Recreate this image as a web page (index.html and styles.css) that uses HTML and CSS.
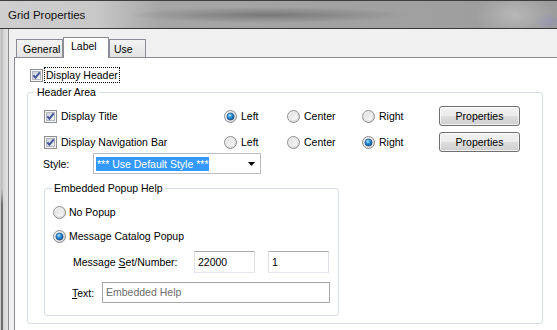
FILE: index.html
```html
<!DOCTYPE html>
<html>
<head>
<meta charset="utf-8">
<link rel="stylesheet" href="styles.css">
</head>
<body>
<svg class="sprite" width="0" height="0" aria-hidden="true">
  <defs>
    <linearGradient id="cbg" x1="0" y1="0" x2="1" y2="1">
      <stop offset="0" stop-color="#cbcfd6"/>
      <stop offset="1" stop-color="#f4f4f6"/>
    </linearGradient>
    <linearGradient id="rg" x1="0" y1="0" x2="1" y2="1">
      <stop offset="0" stop-color="#f6f6f6"/>
      <stop offset="1" stop-color="#d2d2d2"/>
    </linearGradient>
    <linearGradient id="rgi" x1="0" y1="0" x2="1" y2="1">
      <stop offset="0" stop-color="#e2e2e2"/>
      <stop offset="1" stop-color="#f7f7f7"/>
    </linearGradient>
    <radialGradient id="rdot" cx="0.4" cy="0.35" r="0.7">
      <stop offset="0" stop-color="#a6e3ff"/>
      <stop offset="0.45" stop-color="#2e8fd6"/>
      <stop offset="1" stop-color="#0a4c8c"/>
    </radialGradient>
    <symbol id="cb" viewBox="0 0 13 13">
      <rect x="0.5" y="0.5" width="12" height="12" fill="#f5f5f5" stroke="#8e8f8f"/>
      <rect x="2.5" y="2.5" width="8" height="8" fill="url(#cbg)" stroke="#b2b6bd"/>
      <path d="M3.3 6.3 L5.4 8.7 L9.8 3.3" fill="none" stroke="#43569a" stroke-width="1.9"/>
    </symbol>
    <symbol id="rd" viewBox="0 0 13 13">
      <circle cx="6.5" cy="6.5" r="6" fill="url(#rg)" stroke="#8e8f8f"/>
      <circle cx="6.5" cy="6.5" r="4" fill="url(#rgi)"/>
    </symbol>
    <symbol id="rdon" viewBox="0 0 13 13">
      <circle cx="6.5" cy="6.5" r="6" fill="url(#rg)" stroke="#8e8f8f"/>
      <circle cx="6.5" cy="6.5" r="3.6" fill="url(#rdot)" stroke="#1b4a7a" stroke-width="0.6"/>
    </symbol>
  </defs>
</svg>
<div class="window">
  <div class="titlebar"><span class="title">Grid Properties</span></div>
  <div class="body">
    <div class="frame"></div>
    <div class="client">
      <div class="tabs">
        <div class="tab tab-general">General</div>
        <div class="tab tab-label active">Label</div>
        <div class="tab tab-use">Use</div>
      </div>
      <div class="panel">
        <div class="hdr-row">
          <svg class="box" width="13" height="13"><use href="#cb"/></svg>
          <span class="focus">Display Header</span>
        </div>
        <fieldset class="group header-area">
          <legend>Header Area</legend>
          <div class="opts">
            <div class="opt"><svg class="box" width="13" height="13"><use href="#cb"/></svg><span>Display Title</span></div>
            <div class="opt radio"><svg class="box" width="13" height="13"><use href="#rdon"/></svg><span>Left</span></div>
            <div class="opt radio"><svg class="box" width="13" height="13"><use href="#rd"/></svg><span>Center</span></div>
            <div class="opt radio"><svg class="box" width="13" height="13"><use href="#rd"/></svg><span>Right</span></div>
            <div class="btn">Properties</div>

            <div class="opt"><svg class="box" width="13" height="13"><use href="#cb"/></svg><span>Display Navigation Bar</span></div>
            <div class="opt radio"><svg class="box" width="13" height="13"><use href="#rd"/></svg><span>Left</span></div>
            <div class="opt radio"><svg class="box" width="13" height="13"><use href="#rd"/></svg><span>Center</span></div>
            <div class="opt radio"><svg class="box" width="13" height="13"><use href="#rdon"/></svg><span>Right</span></div>
            <div class="btn">Properties</div>
          </div>
          <div class="style-row">
            <span class="style-label">Style:</span>
            <div class="combo">
              <span class="sel">*** Use Default Style ***</span>
              <svg class="arrow" width="7" height="4"><polygon points="0,0 7,0 3.5,4" fill="#000"/></svg>
            </div>
          </div>
          <fieldset class="group embedded">
            <legend>Embedded Popup Help</legend>
            <div class="radio-row first"><svg class="box" width="13" height="13"><use href="#rd"/></svg><span>No Popup</span></div>
            <div class="radio-row"><svg class="box" width="13" height="13"><use href="#rdon"/></svg><span>Message Catalog Popup</span></div>
            <div class="field-row">
              <span class="msg-label">Message <u>S</u>et/Number:</span>
              <div class="input">22000</div>
              <div class="input second">1</div>
            </div>
            <div class="text-row">
              <span class="text-label"><u>T</u>ext:</span>
              <div class="text-input">Embedded Help</div>
            </div>
          </fieldset>
        </fieldset>
      </div>
    </div>
  </div>
</div>
</body>
</html>
```
FILE: styles.css
```css
* { box-sizing: border-box; }
html, body { margin: 0; padding: 0; }
body {
  width: 557px;
  height: 330px;
  overflow: hidden;
  font-family: "Liberation Sans", Arial, sans-serif;
  font-size: 10.5px;
  color: #000;
  background: #f0f0f0;
}
.sprite { display: block; width: 0; height: 0; }
.window { width: 557px; height: 330px; display: flex; flex-direction: column; }

.titlebar {
  flex: none;
  height: 29px;
  border-top: 1px solid #3e3e3e;
  border-bottom: 1px solid #3a3a3a;
  padding-left: 8px;
  display: flex;
  align-items: center;
  background:
    radial-gradient(ellipse 140px 8px at 268px 14px, rgba(112,112,112,0.85), rgba(112,112,112,0)),
    radial-gradient(ellipse 40px 22px at 515px 14px, rgba(190,190,190,0.8), rgba(190,190,190,0)),
    radial-gradient(ellipse 14px 8px at 548px 20px, rgba(140,140,190,0.6), rgba(140,140,190,0)),
    linear-gradient(to right, #cfcfcf 0, #c8c8c8 95px, #a6a6a6 160px, #9c9c9c 100%);
}
.title { font-size: 11.5px; color: #111; padding-top: 1px; }

.body { flex: 1; display: flex; min-height: 0; }
.frame {
  flex: none;
  width: 9px;
  border-right: 1px solid #8c8c8c;
  background:
    linear-gradient(to bottom, #c2c2c2 0, #c2c2c2 160px, #6c6c6c 176px, #6c6c6c 100%) 1px 0 / 2px 100% no-repeat,
    linear-gradient(to right, #c8c8c8 0, #e4e4e4 100%);
}
.client {
  flex: 1;
  display: flex;
  flex-direction: column;
  padding: 8px 0 0 5px;
  background: #f0f0f0;
}

.tabs {
  display: flex;
  align-items: flex-end;
  height: 21px;
  margin-bottom: -1px;
  padding-left: 2px;
  position: relative;
  z-index: 1;
}
.tab {
  height: 18px;
  margin-bottom: 1px;
  border: 1px solid #898c95;
  border-bottom: none;
  background: linear-gradient(#f3f3f3, #e3e3e3);
  padding-top: 3px;
  line-height: 13px;
}
.tab-general { width: 47px; padding-left: 6px; }
.tab-label { width: 46px; padding-left: 7px; }
.tab-use { width: 37px; padding-left: 4px; }
.tab.active {
  height: 21px;
  margin-bottom: 0;
  background: #fff;
  padding-top: 2px;
}

.panel {
  flex: 1;
  background: #fff;
  border-top: 1px solid #898c95;
  border-left: 1px solid #898c95;
  padding-left: 12px;
}
.box { display: block; flex: none; }

.hdr-row {
  display: flex;
  align-items: center;
  height: 18px;
  margin-top: 8px;
  padding-left: 3px;
}
.focus {
  margin-left: 1px;
  border: 1px dotted #000;
  padding: 0 1px;
  line-height: 14px;
}

.group {
  margin: 0;
  padding: 0;
  min-width: 0;
  border: 1px solid #d5dfe5;
  border-radius: 3px;
}
.group > legend {
  margin-left: 7px;
  padding: 0 2px;
  line-height: 13px;
}
.header-area {
  margin-top: 2px;
  width: 516px;
  padding-bottom: 7px;
}

.opts {
  display: grid;
  grid-template-columns: 180px 63px 75px 77px 81px;
  grid-auto-rows: 20px;
  row-gap: 6px;
  align-items: center;
  margin-top: 7px;
  padding-left: 16px;
}
.opt { display: flex; align-items: center; gap: 4px; }
.opt.radio { gap: 4px; }
.btn {
  height: 20px;
  border: 1px solid #707070;
  border-radius: 3px;
  background: linear-gradient(#f2f2f2 0, #ebebeb 50%, #dddddd 50%, #cfcfcf 100%);
  box-shadow: inset 0 0 0 1px rgba(255,255,255,0.7);
  text-align: center;
  line-height: 18px;
}

.style-row {
  display: flex;
  align-items: center;
  height: 21px;
  margin-top: 1px;
  padding-left: 15px;
}
.style-label { width: 50px; }
.combo {
  width: 168px;
  height: 21px;
  border: 1px solid #b9bcc1;
  background: #fff;
  display: flex;
  align-items: center;
  justify-content: space-between;
  padding: 0 5px 0 2px;
}
.sel {
  background: #3399ff;
  color: #fff;
  height: 14px;
  line-height: 14px;
  padding: 0 1px;
}
.arrow { display: block; }

.embedded {
  margin: 8px 0 0 16px;
  width: 295px;
  padding-bottom: 12px;
}
.radio-row {
  display: flex;
  align-items: center;
  gap: 3px;
  height: 20px;
  margin-top: 4px;
  padding-left: 8px;
}
.radio-row.first { margin-top: 7px; }
.field-row {
  display: flex;
  align-items: center;
  height: 22px;
  margin-top: 5px;
  padding-left: 28px;
}
.msg-label { width: 121px; }
.input {
  width: 61px;
  height: 22px;
  border: 1px solid;
  border-color: #abadb3 #dbdfe6 #e3e9ef #e2e3ea;
  padding: 3px 3px 0;
  line-height: 14px;
}
.input.second { margin-left: 13px; }
.text-row {
  display: flex;
  align-items: center;
  height: 21px;
  margin-top: 9px;
  padding-left: 27px;
}
.text-label { width: 30px; }
.text-input {
  width: 228px;
  height: 21px;
  border: 1px solid #a5a7ab;
  color: #6d6d6d;
  padding-left: 3px;
  line-height: 19px;
}
```
